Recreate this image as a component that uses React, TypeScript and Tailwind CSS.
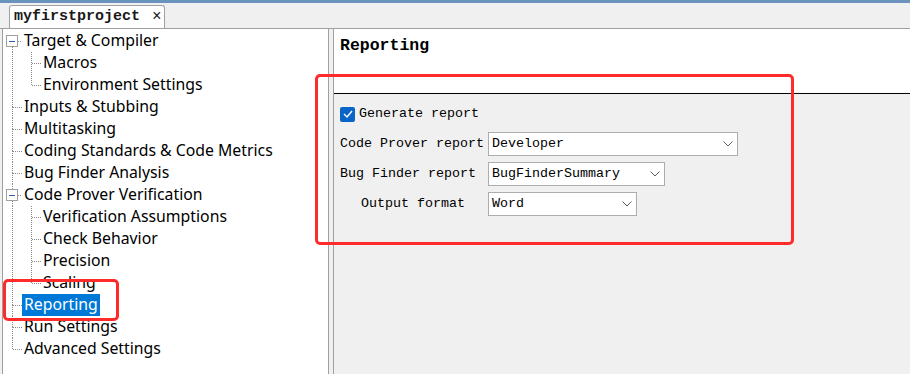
import React from 'react';

interface Node {
  label: string;
  level: 0 | 1;
  box?: boolean;
  lastChild?: boolean;
  selected?: boolean;
}

const nodes: Node[] = [
  { label: 'Target & Compiler', level: 0, box: true },
  { label: 'Macros', level: 1 },
  { label: 'Environment Settings', level: 1, lastChild: true },
  { label: 'Inputs & Stubbing', level: 0 },
  { label: 'Multitasking', level: 0 },
  { label: 'Coding Standards & Code Metrics', level: 0 },
  { label: 'Bug Finder Analysis', level: 0 },
  { label: 'Code Prover Verification', level: 0, box: true },
  { label: 'Verification Assumptions', level: 1 },
  { label: 'Check Behavior', level: 1 },
  { label: 'Precision', level: 1 },
  { label: 'Scaling', level: 1, lastChild: true },
  { label: 'Reporting', level: 0, selected: true },
  { label: 'Run Settings', level: 0 },
  { label: 'Advanced Settings', level: 0 },
];

const dot = { stroke: '#8a8a8a', strokeWidth: 1, strokeDasharray: '1 1' };

// x positions below are relative to the tree's inner left edge (page x = 3)
const TreeRow = ({ node, first, last }: { node: Node; first: boolean; last: boolean }) => {
  const w = node.level === 0 ? 19 : 38;
  return (
    <div className="flex h-[22px] items-center">
      <svg width={w} height={22} className="shrink-0">
        {node.level === 0 ? (
          <>
            {!first && <line x1={9.5} y1={0} x2={9.5} y2={node.box ? 6 : 11} {...dot} />}
            {!last && <line x1={9.5} y1={node.box ? 17 : 11} x2={9.5} y2={22} {...dot} />}
            {last && <line x1={9.5} y1={0} x2={9.5} y2={11} {...dot} />}
            <line x1={node.box ? 15 : 10} y1={11.5} x2={19} y2={11.5} {...dot} />
            {node.box && (
              <>
                <rect x={3.5} y={5.5} width={11} height={11} fill="#fff" stroke="#a0a0a0" />
                <line x1={6} y1={11.5} x2={12} y2={11.5} stroke="#2b5fb4" strokeWidth={1} />
              </>
            )}
          </>
        ) : (
          <>
            <line x1={9.5} y1={0} x2={9.5} y2={22} {...dot} />
            <line x1={28.5} y1={0} x2={28.5} y2={node.lastChild ? 11 : 22} {...dot} />
            <line x1={29} y1={11.5} x2={38} y2={11.5} {...dot} />
          </>
        )}
      </svg>
      <span
        className={`h-[22px] px-[2px] leading-[21px] text-[15.8px] whitespace-nowrap ${
          node.selected ? 'bg-[#0078d7] text-white' : 'text-black'
        }`}
      >
        {node.label}
      </span>
    </div>
  );
};

const Chevron = () => (
  <svg width={10} height={6} viewBox="0 0 10 6" className="shrink-0">
    <path d="M0.5 0.5 L5 5 L9.5 0.5" fill="none" stroke="#606060" strokeWidth={1} />
  </svg>
);

const Combo = ({ value, width }: { value: string; width: string }) => (
  <div className={`${width} h-[24px] bg-white border border-[#adadad] flex items-center justify-between pl-[3px] pr-[4px]`}>
    <span>{value}</span>
    <Chevron />
  </div>
);

export default function App() {
  return (
    <div
      className="relative w-[910px] h-[374px] overflow-hidden bg-[#f0f0f0] flex flex-col"
      style={{ fontFamily: '"Noto Sans", "Open Sans", sans-serif' }}
    >
      <div className="h-[3px] bg-[#6b93bd] shrink-0" />

      {/* tab strip */}
      <div className="h-[25px] shrink-0 flex items-end pl-[9px]">
        <div
          className="h-[23px] w-[156px] bg-white border border-b-0 border-[#a0a0a0] rounded-t-[3px] flex items-center pl-[4px] gap-[12px] text-[15px] font-bold text-[#1a1a1a]"
          style={{ fontFamily: '"Liberation Mono", monospace' }}
        >
          <span>myfirstproject</span>
          <span className="font-normal text-[16px]">×</span>
        </div>
      </div>

      <div className="flex flex-1 border-t border-[#a0a0a0]">
        {/* tree */}
        <div className="ml-[2px] w-[327px] pt-[1px] bg-white border-l border-r border-[#a0a0a0] shrink-0">
          {nodes.map((n, i) => (
            <TreeRow key={n.label} node={n} first={i === 0} last={i === nodes.length - 1} />
          ))}
        </div>

        <div className="w-[4px] shrink-0" />

        {/* settings pane */}
        <div
          className="flex-1 flex flex-col border-l border-[#a0a0a0] text-[13.33px] text-black"
          style={{ fontFamily: '"Liberation Mono", monospace' }}
        >
          <div className="h-[65px] bg-white border-b border-black pl-[6px] pt-[7px]">
            <div className="text-[16.5px] font-bold leading-[20px]">Reporting</div>
          </div>

          <div className="pl-[6px] pt-[8px] flex flex-col gap-[6px]">
            <div className="h-[24px] flex items-center gap-[4px]">
              <div className="w-[15px] h-[15px] rounded-[2px] bg-[#0a64c8] flex items-center justify-center">
                <svg width={10} height={8} viewBox="0 0 10 8">
                  <path d="M1 4 L4 7 L9 1" fill="none" stroke="#fff" strokeWidth={1.4} />
                </svg>
              </div>
              <span>Generate report</span>
            </div>
            <div className="h-[24px] flex items-center">
              <span className="w-[148px]">Code Prover report</span>
              <Combo value="Developer" width="w-[250px]" />
            </div>
            <div className="h-[24px] flex items-center">
              <span className="w-[148px]">Bug Finder report</span>
              <Combo value="BugFinderSummary" width="w-[177px]" />
            </div>
            <div className="h-[24px] flex items-center">
              <span className="w-[148px] pl-[21px]">Output format</span>
              <Combo value="Word" width="w-[149px]" />
            </div>
          </div>
        </div>
      </div>

      {/* red annotation marks */}
      <div className="absolute left-[3px] top-[279px] w-[116px] h-[42px] border-[3px] border-[#ff2a2a] rounded-[5px]" />
      <div className="absolute left-[315px] top-[74px] w-[479px] h-[171px] border-[3px] border-[#ff2a2a] rounded-[5px]" />
    </div>
  );
}
